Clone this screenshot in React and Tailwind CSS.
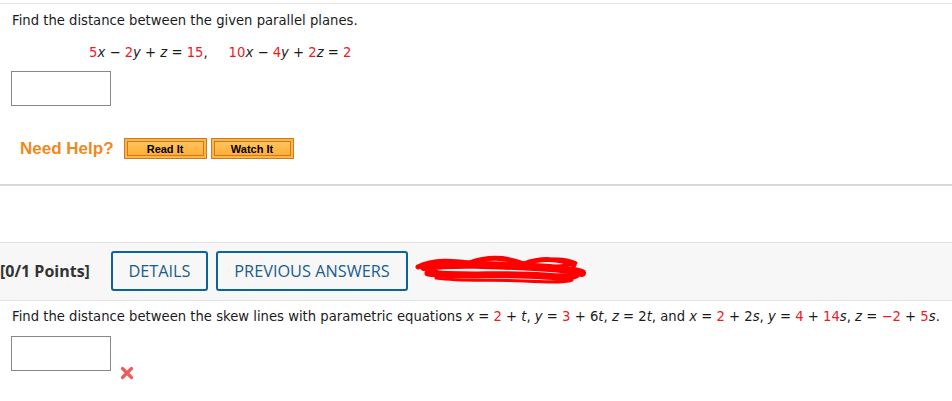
import React from "react";

function R({ children }) {
  return <span className="text-[#e8201f]">{children}</span>;
}

function V({ children }) {
  return <i>{children}</i>;
}

function HelpButton({ label, width }) {
  return (
    <button className={`h-[21px] ${width} shrink-0 border border-[#c97b2a] bg-[#ffb53f] p-[2px]`}>
      <span className="flex h-full items-center justify-center whitespace-nowrap border border-[#c97b2a] bg-gradient-to-b from-[#ffc45e] to-[#ffae33] font-['Liberation_Sans',Arial,sans-serif] text-[11px] font-bold text-black">
        {label}
      </span>
    </button>
  );
}

function OutlineButton({ label, width }) {
  return (
    <button
      className={`flex h-[40px] ${width} items-center justify-center rounded-[3px] border-2 border-[#0c6399] bg-[#f7f7f7] font-['Open_Sans',sans-serif] text-[16.3px] text-[#1a5c8e]`}
    >
      {label}
    </button>
  );
}

function Scribble() {
  return (
    <svg width="175" height="34" viewBox="0 0 175 34" className="ml-[6px] mb-[2px]">
      <g fill="none" stroke="#ff0000" strokeLinecap="round" strokeLinejoin="round">
        <path d="M4 14 C20 6 40 8 55 10 C75 3 95 5 110 11 C125 5 145 5 160 12" strokeWidth="5" />
        <path d="M10 14 C40 10 80 12 120 14 C140 15 155 16 168 20" strokeWidth="8" />
        <path d="M14 20 C45 24 90 20 130 23 C145 24 155 25 162 22" strokeWidth="7" />
        <path d="M22 25 C50 29 80 26 110 28 C130 29 150 30 158 27" strokeWidth="3" />
        <path d="M12 10 C20 18 30 22 40 24" strokeWidth="2" />
        <path d="M135 7 C145 5 155 7 162 10 C150 14 140 12 130 15" strokeWidth="3" />
        <path d="M150 24 C160 22 168 24 170 20" strokeWidth="2" />
      </g>
    </svg>
  );
}

export default function App() {
  return (
    <div className="min-h-[401px] w-[952px] bg-white font-['DejaVu_Sans',Verdana,sans-serif] text-[13.2px] text-[#1b1b1b]">
      <div className="h-[3px] bg-white" />
      <div className="border-t border-[#e2e2e2]" />

      <div className="px-3 pt-[7px]">
        <p className="leading-[20px]">Find the distance between the given parallel planes.</p>
        <p className="mt-[12px] pl-[77px] leading-[20px]">
          <R>5</R>
          <V>x</V> − <R>2</R>
          <V>y</V> + <V>z</V> = <R>15</R>,&nbsp;&nbsp;&nbsp;&nbsp; <R>10</R>
          <V>x</V> − <R>4</R>
          <V>y</V> + <R>2</R>
          <V>z</V> = <R>2</R>
        </p>
        <div className="mt-[8px] ml-[-1px] h-[35px] w-[100px] border border-[#888]" />

        <div className="mt-[30px] flex items-center pl-[8px]">
          <span className="mr-[10px] font-['Liberation_Sans',Arial,sans-serif] text-[17px] font-bold text-[#ee8a1c]">
            Need Help?
          </span>
          <HelpButton label="Read It" width="w-[83px]" />
          <div className="w-[4px]" />
          <HelpButton label="Watch It" width="w-[83px]" />
        </div>
      </div>

      <div className="mt-[22px] h-[2px] bg-[#d8d8d8]" />

      <div className="mt-[56px] flex h-[59px] items-center border-y border-[#e2e2e2] bg-[#f7f7f7]">
        <span className="w-[111px] font-['Open_Sans',sans-serif] text-[16px] font-bold text-[#333]">
          [0/1 Points]
        </span>
        <div className="flex items-center gap-[8px]">
          <OutlineButton label="DETAILS" width="w-[97px]" />
          <OutlineButton label="PREVIOUS ANSWERS" width="w-[192px]" />
        </div>
        <Scribble />
      </div>

      <div className="px-3 pt-[6px]">
        <p className="leading-[20px] whitespace-nowrap">
          Find the distance between the skew lines with parametric equations <V>x</V> = <R>2</R> + <V>t</V>,{" "}
          <V>y</V> = <R>3</R> + 6<V>t</V>, <V>z</V> = 2<V>t</V>, and <V>x</V> = <R>2</R> + 2<V>s</V>, <V>y</V> ={" "}
          <R>4</R> + <R>14</R>
          <V>s</V>, <V>z</V> = <R>−2</R> + <R>5</R>
          <V>s</V>.
        </p>
        <div className="mt-[9px] flex items-start">
          <div className="ml-[-1px] h-[35px] w-[100px] border border-[#888]" />
          <svg width="14" height="14" viewBox="0 0 14 14" className="ml-[9px] mt-[30px]">
            <path d="M2.5 2.5 L11.5 11.5 M11.5 2.5 L2.5 11.5" stroke="#f05a5a" strokeWidth="3.2" strokeLinecap="round" />
          </svg>
        </div>
      </div>
    </div>
  );
}
